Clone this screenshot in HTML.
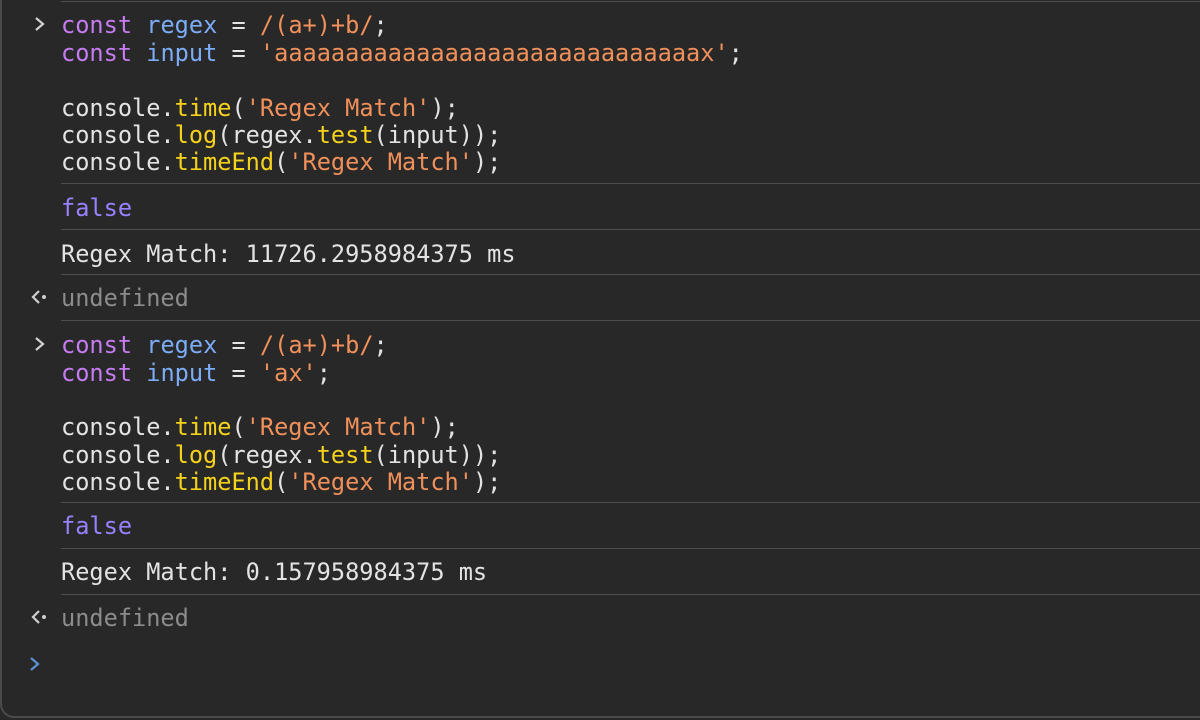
<!DOCTYPE html>
<html><head><style>
html,body{margin:0;padding:0;background:#282828;width:1200px;height:720px;overflow:hidden}
.frame{position:absolute;left:0;top:-20px;width:1220px;height:738px;border:2px solid #4a4a4a;border-radius:14px;box-sizing:border-box;background:#282828}
.l{position:absolute;left:61px;font-family:"DejaVu Sans Mono","Liberation Mono",monospace;font-size:23.6px;line-height:28px;white-space:pre;color:#e3e3e3}
.sep{position:absolute;left:61px;right:0;height:1px;background:#4e4e4e}
.k{color:#c57cf2}.v{color:#7cacf8}.s{color:#f0905a}.f{color:#f5d21b}.b{color:#9980ff}.u{color:#8c8c8c}
.ic{position:absolute;left:30px}
</style></head><body>
<div class="frame"></div>
<div class="sep" style="top:1px"></div>
<svg class="ic" style="top:15px;left:32px" width="18" height="18"><path d="M4 3 L11 9 L4 15" stroke="#d0d0d0" stroke-width="2.2" fill="none"/></svg>
<div class="l" style="top:11px"><span class="k">const</span> <span class="v">regex</span> = <span class="s">/(a+)+b/</span>;</div>
<div class="l" style="top:39px"><span class="k">const</span> <span class="v">input</span> = <span class="s">'aaaaaaaaaaaaaaaaaaaaaaaaaaaaaax'</span>;</div>
<div class="l" style="top:94px">console.<span class="f">time</span>(<span class="s">'Regex Match'</span>);</div>
<div class="l" style="top:121px">console.<span class="f">log</span>(regex.<span class="f">test</span>(input));</div>
<div class="l" style="top:148px">console.<span class="f">timeEnd</span>(<span class="s">'Regex Match'</span>);</div>
<div class="sep" style="top:183px"></div>
<div class="l b" style="top:194px">false</div>
<div class="sep" style="top:229px"></div>
<div class="l" style="top:240px">Regex Match: 11726.2958984375 ms</div>
<div class="sep" style="top:274px"></div>
<svg class="ic" style="top:288px" width="20" height="18"><path d="M9 3 L3 9 L9 15" stroke="#d0d0d0" stroke-width="2.2" fill="none"/><circle cx="14" cy="9" r="2" fill="#d0d0d0"/></svg>
<div class="l u" style="top:284px">undefined</div>
<div class="sep" style="top:320px"></div>
<svg class="ic" style="top:335px;left:32px" width="18" height="18"><path d="M4 3 L11 9 L4 15" stroke="#d0d0d0" stroke-width="2.2" fill="none"/></svg>
<div class="l" style="top:331px"><span class="k">const</span> <span class="v">regex</span> = <span class="s">/(a+)+b/</span>;</div>
<div class="l" style="top:359px"><span class="k">const</span> <span class="v">input</span> = <span class="s">'ax'</span>;</div>
<div class="l" style="top:413px">console.<span class="f">time</span>(<span class="s">'Regex Match'</span>);</div>
<div class="l" style="top:441px">console.<span class="f">log</span>(regex.<span class="f">test</span>(input));</div>
<div class="l" style="top:468px">console.<span class="f">timeEnd</span>(<span class="s">'Regex Match'</span>);</div>
<div class="sep" style="top:502px"></div>
<div class="l b" style="top:512px">false</div>
<div class="sep" style="top:548px"></div>
<div class="l" style="top:558px">Regex Match: 0.157958984375 ms</div>
<div class="sep" style="top:594px"></div>
<svg class="ic" style="top:608px" width="20" height="18"><path d="M9 3 L3 9 L9 15" stroke="#d0d0d0" stroke-width="2.2" fill="none"/><circle cx="14" cy="9" r="2" fill="#d0d0d0"/></svg>
<div class="l u" style="top:604px">undefined</div>
<svg class="ic" style="top:655px;left:27px" width="18" height="18"><path d="M4 3 L11 9 L4 15" stroke="#5b8fd6" stroke-width="2.2" fill="none"/></svg>
</body></html>
